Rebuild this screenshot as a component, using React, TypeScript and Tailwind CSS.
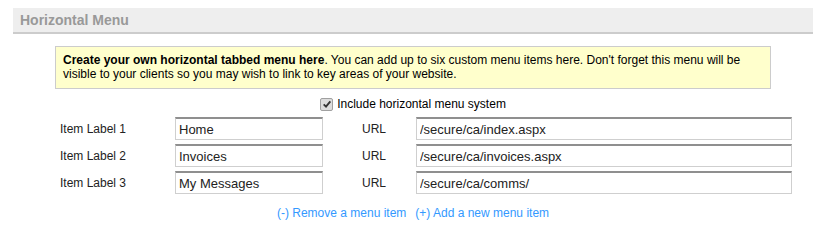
import React from 'react';

const items = [
  { label: 'Item Label 1', name: 'Home', url: '/secure/ca/index.aspx' },
  { label: 'Item Label 2', name: 'Invoices', url: '/secure/ca/invoices.aspx' },
  { label: 'Item Label 3', name: 'My Messages', url: '/secure/ca/comms/' },
];

const inputClass =
  'h-[23px] px-[3px] text-[13px] text-[#222] bg-white border border-[#cfcfcf] border-t-[#8f8f8f] border-t-2 outline-none';

const App: React.FC = () => {
  return (
    <div className="w-[818px] h-[237px] bg-white pt-2 pl-[13px] pr-[5px] text-[12px] text-[#222] font-['Liberation_Sans',Arial,sans-serif]">
      {/* Header */}
      <div className="h-[26px] bg-[#eeeeee] border-b-2 border-[#cccccc] pl-[7px] flex items-center">
        <h2 className="text-[14px] font-bold text-[#999999] leading-none">Horizontal Menu</h2>
      </div>

      {/* Notice */}
      <div className="mt-3 mx-[42px] bg-[#ffffcc] border border-[#cccccc] px-[7px] pt-[6px] pb-[7px] leading-[14px] text-black">
        <p>
          <span className="font-bold">Create your own horizontal tabbed menu here</span>. You can add up to six custom
          menu items here. Don't forget this menu will be visible to your clients so you may wish to link to key areas
          of your website.
        </p>
      </div>

      {/* Toggle */}
      <div className="mt-[8px] flex items-center justify-center gap-[4px] h-[14px]">
        <span className="w-[13px] h-[13px] rounded-[2px] border border-[#a0a0a0] bg-[#dcdcdc] flex items-center justify-center">
          <svg viewBox="0 0 12 12" className="w-[10px] h-[10px]">
            <path d="M2 6.5 L4.8 9.2 L10 2.8" fill="none" stroke="#333" strokeWidth={2.2} />
          </svg>
        </span>
        <span className="text-black">Include horizontal menu system</span>
      </div>

      {/* Items */}
      <div className="mt-[6px] flex flex-col gap-[4px]">
        {items.map((item) => (
          <div key={item.label} className="flex items-center">
            <span className="w-[162px] pl-[47px] shrink-0 whitespace-nowrap">{item.label}</span>
            <input className={`${inputClass} w-[148px]`} defaultValue={item.name} />
            <span className="w-[93px] pl-[39px] shrink-0">URL</span>
            <input className={`${inputClass} w-[376px]`} defaultValue={item.url} />
          </div>
        ))}
      </div>

      {/* Links */}
      <div className="mt-[10px] flex justify-center gap-[9px] text-[#3399ff]">
        <a className="cursor-pointer">(-) Remove a menu item</a>
        <a className="cursor-pointer">(+) Add a new menu item</a>
      </div>
    </div>
  );
};

export default App;
